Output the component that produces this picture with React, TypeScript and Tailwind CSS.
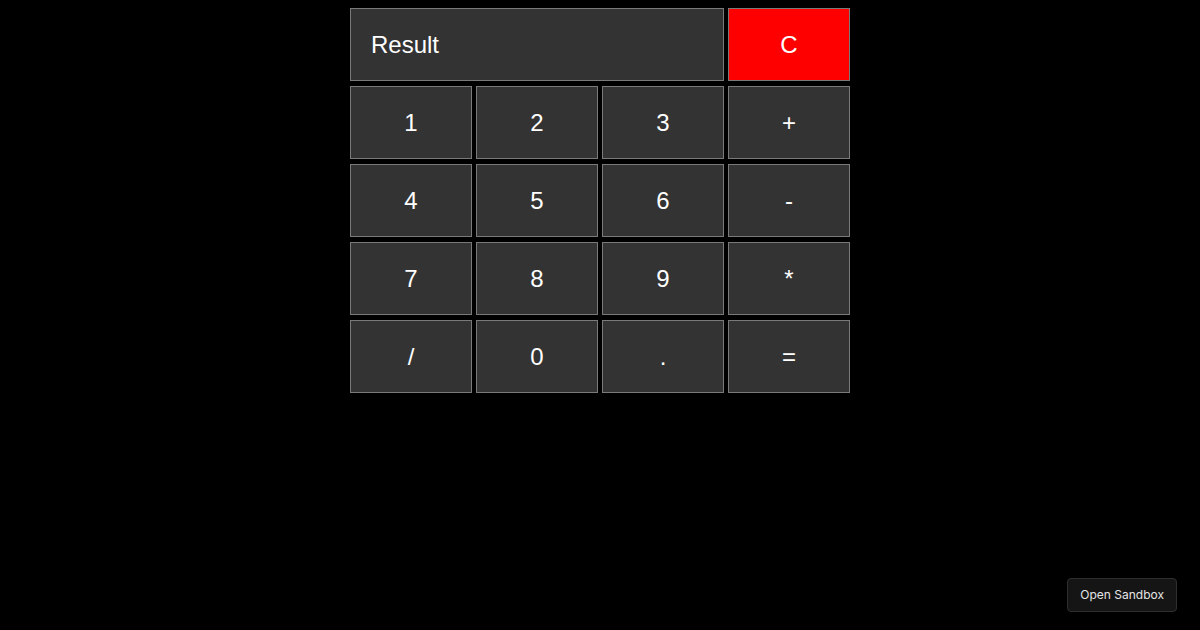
import React, { useState } from 'react';

const keys = ['1', '2', '3', '+', '4', '5', '6', '-', '7', '8', '9', '*', '/', '0', '.', '='];

const App: React.FC = () => {
  const [result, setResult] = useState('');

  const handleKey = (key: string) => {
    if (key === '=') {
      try {
        // eslint-disable-next-line no-new-func
        setResult(String(Function(`return (${result})`)()));
      } catch (e) {
        setResult('Error');
      }
      return;
    }
    setResult(prev => prev + key);
  };

  return (
    <div
      className="min-h-screen w-full bg-black text-white relative"
      style={{ fontFamily: '"Liberation Sans", Arial, sans-serif' }}
    >
      <div className="w-[500px] mx-auto pt-2 grid grid-cols-4 gap-x-1 gap-y-[5px]">
        {/* Display */}
        <div className="col-span-3 h-[73px] bg-[#333333] border border-[#7a7a7a] flex items-center px-5 text-2xl">
          {result || 'Result'}
        </div>
        <button
          className="h-[73px] bg-[#ff0000] border border-[#7a7a7a] text-2xl text-white"
          onClick={() => setResult('')}
        >
          C
        </button>

        {/* Keys */}
        {keys.map(key => (
          <button
            key={key}
            className="h-[73px] bg-[#333333] border border-[#7a7a7a] text-2xl text-white"
            onClick={() => handleKey(key)}
          >
            {key}
          </button>
        ))}
      </div>

      <button
        className="absolute right-[23px] bottom-[18px] h-[34px] px-3 rounded bg-[#151515] border border-[#2e2e2e] text-[12px] text-[#e5e5e5]"
        style={{ fontFamily: 'Inter, "Noto Sans", sans-serif' }}
      >
        Open Sandbox
      </button>
    </div>
  );
};

export default App;
